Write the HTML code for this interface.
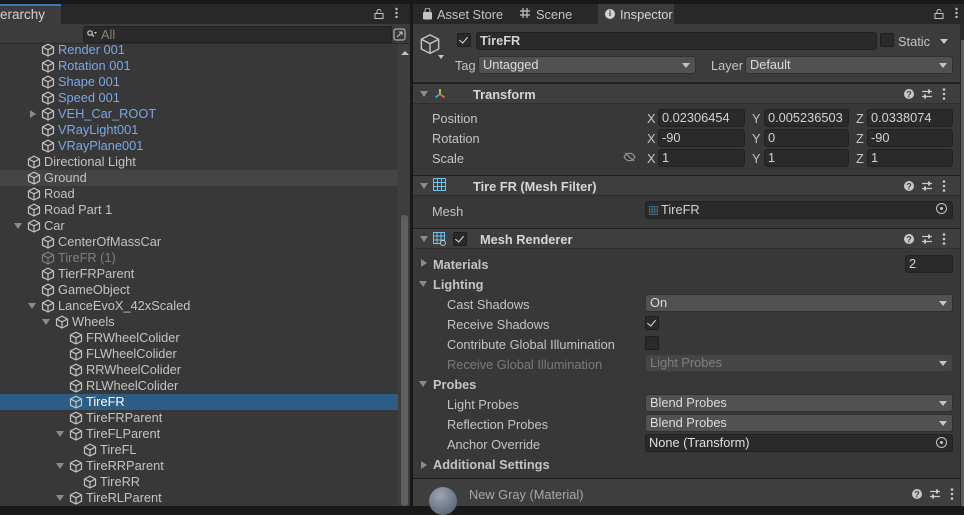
<!DOCTYPE html>
<html><head><meta charset="utf-8"><style>
*{margin:0;padding:0;box-sizing:border-box}
body{width:964px;height:506px;overflow:hidden;background:#191919;font-family:"Liberation Sans",sans-serif;font-size:12.8px;color:#c4c4c4;position:relative}
.a{position:absolute;white-space:nowrap}
.r{position:absolute;left:0;width:398px;height:16px;line-height:16px}
.ic{position:absolute;top:1px;width:14px;height:14px}
.ar{position:absolute;top:5px;width:0;height:0}
.dn{border-left:4px solid transparent;border-right:4px solid transparent;border-top:6px solid #8a8a8a}
.rt{border-top:4px solid transparent;border-bottom:4px solid transparent;border-left:6px solid #8a8a8a}
.fld{position:absolute;height:18px;background:#2a2a2a;border:1px solid #212121;border-radius:3px;line-height:16px;padding-left:3px;color:#d2d2d2}
.dd{position:absolute;height:18px;background:#515151;border:1px solid #303030;border-radius:3px;line-height:16px;padding-left:4px;color:#dcdcdc}
.dd:after{content:"";position:absolute;right:5px;top:6px;border-left:4px solid transparent;border-right:4px solid transparent;border-top:5px solid #c4c4c4}
.hdr{position:absolute;left:413px;width:547px;height:21px;background:#3e3e3e;border-top:1px solid #1f1f1f;border-bottom:1px solid #2f2f2f}
.hdr b{position:absolute;left:60px;top:3px;color:#d6d6d6}
.lb{position:absolute;color:#c4c4c4}
.cb{position:absolute;width:14px;height:14px;background:#2a2a2a;border:1px solid #1d1d1d;border-radius:2px}
.ck:after{content:"";position:absolute;left:3px;top:1px;width:4px;height:7px;border:solid #e0e0e0;border-width:0 1.5px 1.5px 0;transform:rotate(40deg)}
.tools{position:absolute;right:12px;top:4px}
</style></head><body>
<svg width="0" height="0" style="position:absolute"><defs>
<symbol id="cube" viewBox="0 0 14 14"><path d="M7 1.2L12.5 4v6.2L7 13 1.5 10.2V4z M1.5 4L7 6.8 12.5 4 M7 6.8V13" fill="none" stroke="#c4c4c4" stroke-width="1.2" stroke-linejoin="round"/></symbol>
<symbol id="tools" viewBox="0 0 44 12"><circle cx="5" cy="6" r="5" fill="#c8c8c8"/><text x="5" y="9.3" font-size="9" font-weight="bold" text-anchor="middle" fill="#3e3e3e" font-family="Liberation Sans">?</text><path d="M18 3.5h10 M18 8.5h10" stroke="#c8c8c8" stroke-width="1.3"/><path d="M25 1.5v4 M21 6.5v4" stroke="#c8c8c8" stroke-width="2"/><circle cx="40" cy="1.5" r="1.3" fill="#c8c8c8"/><circle cx="40" cy="6" r="1.3" fill="#c8c8c8"/><circle cx="40" cy="10.5" r="1.3" fill="#c8c8c8"/></symbol>
</defs></svg>

<!-- Hierarchy panel -->
<div class="a" style="left:0;top:4px;width:410px;height:502px;background:#383838"></div>
<div class="a" style="left:0;top:4px;width:410px;height:20px;background:#282828"></div>
<div class="a" style="left:0;top:4px;width:61px;height:20px;background:#3c3c3c;border-top:2px solid #3a79bb"></div>
<div class="a" style="left:0;top:7px;color:#d0d0d0;font-size:13.5px">erarchy</div>
<div class="a" style="left:374px;top:7px;width:10px;height:10px"><svg width="10" height="10"><rect x="1" y="4.5" width="8" height="5" fill="none" stroke="#c4c4c4"/><path d="M3 4.5V2.5a2 2 0 0 1 4 0" fill="none" stroke="#c4c4c4"/></svg></div>
<div class="a" style="left:395px;top:7px;width:3px;height:12px"><svg width="3" height="12"><circle cx="1.5" cy="2" r="1.2" fill="#c4c4c4"/><circle cx="1.5" cy="6" r="1.2" fill="#c4c4c4"/><circle cx="1.5" cy="10" r="1.2" fill="#c4c4c4"/></svg></div>
<div class="a" style="left:0;top:24px;width:410px;height:20px;background:#3c3c3c;border-bottom:1px solid #2a2a2a"></div>
<div class="a" style="left:83px;top:26px;width:325px;height:17px;background:#2a2a2a;border:1px solid #222;border-radius:3px"></div>
<svg class="a" style="left:87px;top:30px" width="10" height="8"><circle cx="3" cy="3" r="2.2" fill="none" stroke="#c4c4c4" stroke-width="1.2"/><path d="M5 4.5l2 2" stroke="#c4c4c4" stroke-width="1.3"/><path d="M7 2h3l-1.5 2z" fill="#c4c4c4"/></svg>
<div class="a" style="left:101px;top:27px;color:#808080">All</div>
<div class="a" style="left:391px;top:26px;width:17px;height:17px;background:#3a3a3a;border-left:1px solid #222"></div>
<svg class="a" style="left:393px;top:28px" width="13" height="13"><rect x="1" y="1" width="11" height="11" rx="2" fill="none" stroke="#c4c4c4"/><path d="M4 9l5-5 M6 4h3v3" fill="none" stroke="#c4c4c4"/></svg>

<div class="a" style="left:0;top:170px;width:398px;height:16px;background:#444"></div>
<div class="a" style="left:0;top:394px;width:398px;height:16px;background:#2c5d87"></div>
<div class="a" style="left:398px;top:44px;width:12px;height:462px;background:#3e3e3e"></div>
<div class="a" style="left:401px;top:215px;width:7px;height:291px;background:#5f5f5f;border-radius:3px"></div>
<div class="a" style="left:401px;top:51px;border-left:4px solid transparent;border-right:4px solid transparent;border-bottom:4px solid #c4c4c4"></div>

<div class="r" style="top:42px"><svg class="ic" style="left:41px"><use href="#cube"/></svg><span class="a" style="left:58px;color:#7ca6e8">Render 001</span></div>
<div class="r" style="top:58px"><svg class="ic" style="left:41px"><use href="#cube"/></svg><span class="a" style="left:58px;color:#7ca6e8">Rotation 001</span></div>
<div class="r" style="top:74px"><svg class="ic" style="left:41px"><use href="#cube"/></svg><span class="a" style="left:58px;color:#7ca6e8">Shape 001</span></div>
<div class="r" style="top:90px"><svg class="ic" style="left:41px"><use href="#cube"/></svg><span class="a" style="left:58px;color:#7ca6e8">Speed 001</span></div>
<div class="r" style="top:106px"><div class="ar rt" style="left:30px;top:4px"></div><svg class="ic" style="left:41px"><use href="#cube"/></svg><span class="a" style="left:58px;color:#7ca6e8">VEH_Car_ROOT</span></div>
<div class="r" style="top:122px"><svg class="ic" style="left:41px"><use href="#cube"/></svg><span class="a" style="left:58px;color:#7ca6e8">VRayLight001</span></div>
<div class="r" style="top:138px"><svg class="ic" style="left:41px"><use href="#cube"/></svg><span class="a" style="left:58px;color:#7ca6e8">VRayPlane001</span></div>
<div class="r" style="top:154px"><svg class="ic" style="left:27px"><use href="#cube"/></svg><span class="a" style="left:44px">Directional Light</span></div>
<div class="r" style="top:170px"><svg class="ic" style="left:27px"><use href="#cube"/></svg><span class="a" style="left:44px">Ground</span></div>
<div class="r" style="top:186px"><svg class="ic" style="left:27px"><use href="#cube"/></svg><span class="a" style="left:44px">Road</span></div>
<div class="r" style="top:202px"><svg class="ic" style="left:27px"><use href="#cube"/></svg><span class="a" style="left:44px">Road Part 1</span></div>
<div class="r" style="top:218px"><div class="ar dn" style="left:14px"></div><svg class="ic" style="left:27px"><use href="#cube"/></svg><span class="a" style="left:44px">Car</span></div>
<div class="r" style="top:234px"><svg class="ic" style="left:41px"><use href="#cube"/></svg><span class="a" style="left:58px">CenterOfMassCar</span></div>
<div class="r" style="top:250px;opacity:.5"><svg class="ic" style="left:41px"><use href="#cube"/></svg><span class="a" style="left:58px">TireFR (1)</span></div>
<div class="r" style="top:266px"><svg class="ic" style="left:41px"><use href="#cube"/></svg><span class="a" style="left:58px">TierFRParent</span></div>
<div class="r" style="top:282px"><svg class="ic" style="left:41px"><use href="#cube"/></svg><span class="a" style="left:58px">GameObject</span></div>
<div class="r" style="top:298px"><div class="ar dn" style="left:28px"></div><svg class="ic" style="left:41px"><use href="#cube"/></svg><span class="a" style="left:58px">LanceEvoX_42xScaled</span></div>
<div class="r" style="top:314px"><div class="ar dn" style="left:42px"></div><svg class="ic" style="left:55px"><use href="#cube"/></svg><span class="a" style="left:72px">Wheels</span></div>
<div class="r" style="top:330px"><svg class="ic" style="left:69px"><use href="#cube"/></svg><span class="a" style="left:86px">FRWheelColider</span></div>
<div class="r" style="top:346px"><svg class="ic" style="left:69px"><use href="#cube"/></svg><span class="a" style="left:86px">FLWheelColider</span></div>
<div class="r" style="top:362px"><svg class="ic" style="left:69px"><use href="#cube"/></svg><span class="a" style="left:86px">RRWheelColider</span></div>
<div class="r" style="top:378px"><svg class="ic" style="left:69px"><use href="#cube"/></svg><span class="a" style="left:86px">RLWheelColider</span></div>
<div class="r" style="top:394px"><svg class="ic" style="left:69px"><use href="#cube"/></svg><span class="a" style="left:86px;color:#fff">TireFR</span></div>
<div class="r" style="top:410px"><svg class="ic" style="left:69px"><use href="#cube"/></svg><span class="a" style="left:86px">TireFRParent</span></div>
<div class="r" style="top:426px"><div class="ar dn" style="left:56px"></div><svg class="ic" style="left:69px"><use href="#cube"/></svg><span class="a" style="left:86px">TireFLParent</span></div>
<div class="r" style="top:442px"><svg class="ic" style="left:83px"><use href="#cube"/></svg><span class="a" style="left:100px">TireFL</span></div>
<div class="r" style="top:458px"><div class="ar dn" style="left:56px"></div><svg class="ic" style="left:69px"><use href="#cube"/></svg><span class="a" style="left:86px">TireRRParent</span></div>
<div class="r" style="top:474px"><svg class="ic" style="left:83px"><use href="#cube"/></svg><span class="a" style="left:100px">TireRR</span></div>
<div class="r" style="top:490px"><div class="ar dn" style="left:56px"></div><svg class="ic" style="left:69px"><use href="#cube"/></svg><span class="a" style="left:86px">TireRLParent</span></div>

<!-- Inspector panel -->
<div class="a" style="left:413px;top:4px;width:551px;height:502px;background:#383838"></div>
<div class="a" style="left:413px;top:4px;width:551px;height:20px;background:#282828"></div>
<div class="a" style="left:598px;top:4px;width:76px;height:20px;background:#3c3c3c"></div>
<svg class="a" style="left:422px;top:8px" width="11" height="12"><path d="M3 4V2.5a2.5 2.5 0 0 1 5 0V4" fill="none" stroke="#c4c4c4"/><rect x="1" y="4" width="9" height="7.5" rx="1" fill="#c4c4c4"/></svg>
<div class="a" style="left:437px;top:7px">Asset Store</div>
<svg class="a" style="left:520px;top:8px" width="10" height="10"><path d="M3 0v10 M7 0v10 M0 3h10 M0 7h10" stroke="#c4c4c4" stroke-width="1.2"/></svg>
<div class="a" style="left:536px;top:7px">Scene</div>
<div class="a" style="left:605px;top:9px;width:10px;height:10px;background:#d0d0d0;border-radius:50%;color:#383838;font-size:8px;line-height:10px;text-align:center;font-weight:bold">i</div>
<div class="a" style="left:620px;top:7px;color:#d6d6d6">Inspector</div>
<div class="a" style="left:934px;top:7px;width:10px;height:10px"><svg width="10" height="10"><rect x="1" y="4.5" width="8" height="5" fill="none" stroke="#c4c4c4"/><path d="M3 4.5V2.5a2 2 0 0 1 4 0" fill="none" stroke="#c4c4c4"/></svg></div>
<div class="a" style="left:955px;top:7px;width:3px;height:12px"><svg width="3" height="12"><circle cx="1.5" cy="2" r="1.2" fill="#c4c4c4"/><circle cx="1.5" cy="6" r="1.2" fill="#c4c4c4"/><circle cx="1.5" cy="10" r="1.2" fill="#c4c4c4"/></svg></div>
<div class="a" style="left:960px;top:24px;width:4px;height:482px;background:#2b2b2b"></div>
<div class="a" style="left:961px;top:40px;width:3px;height:466px;background:#5f5f5f"></div>

<div class="a" style="left:413px;top:24px;width:547px;height:59px;background:#3c3c3c;border-bottom:1px solid #232323"></div>
<svg class="a" style="left:419px;top:32px" width="22" height="24" viewBox="0 0 14 14"><path d="M7 1.2L12.5 4v6.2L7 13 1.5 10.2V4z M1.5 4L7 6.8 12.5 4 M7 6.8V13" fill="none" stroke="#c4c4c4" stroke-width=".9" stroke-linejoin="round"/></svg>
<div class="a" style="left:438px;top:55px;border-left:3px solid transparent;border-right:3px solid transparent;border-top:4px solid #c4c4c4"></div>
<div class="cb ck" style="left:457px;top:33px"></div>
<div class="fld" style="left:476px;top:32px;width:401px;font-weight:bold">TireFR</div>
<div class="cb" style="left:880px;top:33px"></div>
<div class="lb" style="left:898px;top:34px">Static</div>
<div class="a" style="left:940px;top:39px;border-left:4px solid transparent;border-right:4px solid transparent;border-top:5px solid #c4c4c4"></div>
<div class="lb" style="left:455px;top:58px">Tag</div>
<div class="dd" style="left:478px;top:56px;width:218px">Untagged</div>
<div class="lb" style="left:711px;top:58px">Layer</div>
<div class="dd" style="left:745px;top:56px;width:208px">Default</div>

<div class="hdr" style="top:83px"><div class="ar dn" style="left:7px;top:7px"></div><b>Transform</b><svg class="tools" width="44" height="12"><use href="#tools"/></svg></div>
<svg class="a" style="left:433px;top:87px" width="14" height="14"><path d="M7 7V2" stroke="#8fd14f" stroke-width="2"/><path d="M7 7L2.5 10.5" stroke="#3aa0e8" stroke-width="2"/><path d="M7 7L11.5 10.5" stroke="#e8603a" stroke-width="2"/></svg>
<div class="lb" style="left:432px;top:111px">Position</div>
<div class="lb" style="left:432px;top:131px">Rotation</div>
<div class="lb" style="left:432px;top:151px">Scale</div>
<svg class="a" style="left:623px;top:152px" width="13" height="10"><path d="M1 5c3-5 8-5 11 0c-3 5-8 5-11 0z M2 1l9 8" fill="none" stroke="#a0a0a0"/></svg>
<div class="lb" style="left:647px;top:111px">X</div><div class="fld" style="left:658px;top:109px;width:87px">0.02306454</div>
<div class="lb" style="left:752px;top:111px">Y</div><div class="fld" style="left:764px;top:109px;width:85px">0.005236503</div>
<div class="lb" style="left:856px;top:111px">Z</div><div class="fld" style="left:867px;top:109px;width:86px">0.0338074</div>
<div class="lb" style="left:647px;top:131px">X</div><div class="fld" style="left:658px;top:129px;width:87px">-90</div>
<div class="lb" style="left:752px;top:131px">Y</div><div class="fld" style="left:764px;top:129px;width:85px">0</div>
<div class="lb" style="left:856px;top:131px">Z</div><div class="fld" style="left:867px;top:129px;width:86px">-90</div>
<div class="lb" style="left:647px;top:151px">X</div><div class="fld" style="left:658px;top:149px;width:87px">1</div>
<div class="lb" style="left:752px;top:151px">Y</div><div class="fld" style="left:764px;top:149px;width:85px">1</div>
<div class="lb" style="left:856px;top:151px">Z</div><div class="fld" style="left:867px;top:149px;width:86px">1</div>

<div class="hdr" style="top:175px"><div class="ar dn" style="left:7px;top:7px"></div><b>Tire FR (Mesh Filter)</b><svg class="tools" width="44" height="12"><use href="#tools"/></svg></div>
<svg class="a" style="left:433px;top:178px" width="13" height="13"><path d="M.5 .5h12v12h-12z M4.5 .5v12 M8.5 .5v12 M.5 4.5h12 M.5 8.5h12" fill="none" stroke="#6ec3f0"/></svg>
<div class="lb" style="left:432px;top:204px">Mesh</div>
<div class="fld" style="left:645px;top:201px;width:308px;padding-left:15px">TireFR</div>
<svg class="a" style="left:649px;top:206px" width="9" height="9"><path d="M.5 .5h8v8h-8z M3.2 .5v8 M5.8 .5v8 M.5 3.2h8 M.5 5.8h8" fill="none" stroke="#4a7fa0" stroke-width=".7"/></svg>
<div class="a" style="left:936px;top:203px;width:11px;height:11px;border:1px solid #c4c4c4;border-radius:50%"></div>
<div class="a" style="left:940px;top:207px;width:3px;height:3px;background:#c4c4c4;border-radius:50%"></div>

<div class="hdr" style="top:228px"><div class="ar dn" style="left:7px;top:7px"></div><b style="left:67px">Mesh Renderer</b><svg class="tools" width="44" height="12"><use href="#tools"/></svg></div>
<svg class="a" style="left:433px;top:232px" width="14" height="14"><path d="M.5 .5h11v11h-11z M4 .5v11 M8 .5v11 M.5 4h11 M.5 8h11" fill="none" stroke="#6ec3f0"/><circle cx="10" cy="11" r="2.5" fill="#3e3e3e" stroke="#c4c4c4"/></svg>
<div class="cb ck" style="left:453px;top:232px"></div>
<div class="ar rt" style="left:421px;top:259px"></div><div class="lb" style="left:433px;top:257px;font-weight:bold">Materials</div>
<div class="fld" style="left:905px;top:255px;width:48px">2</div>
<div class="ar dn" style="left:419px;top:281px"></div><div class="lb" style="left:433px;top:277px;font-weight:bold">Lighting</div>
<div class="lb" style="left:447px;top:297px">Cast Shadows</div><div class="dd" style="left:645px;top:294px;width:308px">On</div>
<div class="lb" style="left:447px;top:317px">Receive Shadows</div><div class="cb ck" style="left:645px;top:316px"></div>
<div class="lb" style="left:447px;top:337px">Contribute Global Illumination</div><div class="cb" style="left:645px;top:336px"></div>
<div class="lb" style="left:447px;top:357px;color:#7a7a7a">Receive Global Illumination</div><div class="dd" style="left:645px;top:354px;width:308px;background:#454545;color:#808080;border-color:#3a3a3a">Light Probes</div>
<div class="ar dn" style="left:419px;top:381px"></div><div class="lb" style="left:433px;top:377px;font-weight:bold">Probes</div>
<div class="lb" style="left:447px;top:397px">Light Probes</div><div class="dd" style="left:645px;top:394px;width:308px">Blend Probes</div>
<div class="lb" style="left:447px;top:417px">Reflection Probes</div><div class="dd" style="left:645px;top:414px;width:308px">Blend Probes</div>
<div class="lb" style="left:447px;top:437px">Anchor Override</div><div class="fld" style="left:645px;top:434px;width:308px;color:#e0e0e0">None (Transform)</div>
<div class="a" style="left:936px;top:437px;width:11px;height:11px;border:1px solid #c4c4c4;border-radius:50%"></div>
<div class="a" style="left:940px;top:441px;width:3px;height:3px;background:#c4c4c4;border-radius:50%"></div>
<div class="ar rt" style="left:421px;top:461px"></div><div class="lb" style="left:433px;top:457px;font-weight:bold">Additional Settings</div>

<div class="a" style="left:413px;top:478px;width:547px;height:28px;background:#3e3e3e;border-top:1px solid #1f1f1f"></div>
<div class="a" style="left:429px;top:487px;width:28px;height:28px;border-radius:50%;background:radial-gradient(circle at 40% 30%,#9aa4b4,#505866)"></div>
<div class="lb" style="left:469px;top:487px;color:#a8a8a8">New Gray (Material)</div>
<svg class="a" style="left:912px;top:488px" width="44" height="12"><use href="#tools"/></svg>
</body></html>
